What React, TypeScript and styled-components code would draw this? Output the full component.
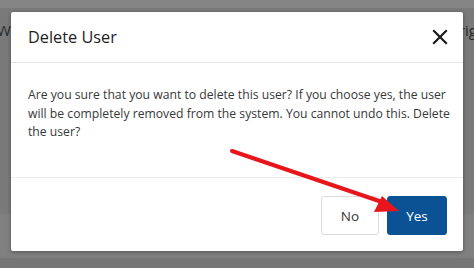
import React from "react";
import styled, { createGlobalStyle } from "styled-components";

const Global = createGlobalStyle`
  html, body { margin: 0; padding: 0; }
  body {
    width: 474px;
    height: 268px;
    overflow: hidden;
    background: #7c7c7c;
    font-family: "Open Sans", "Noto Sans", sans-serif;
  }
`;

const Page = styled.div`
  position: relative;
  width: 474px;
  height: 268px;
  box-sizing: border-box;
  padding: 12px 11px 17px;
  background: linear-gradient(#858585 0, #858585 8px, #7a7a7a 8px, #7a7a7a 214px, #808080 214px, #808080 258px, #767676 258px);
`;

const BackText = styled.span<{ $side: "left" | "right" }>`
  position: absolute;
  top: 20px;
  ${(p) => (p.$side === "left" ? "left: -3px;" : "right: -3px;")}
  font-size: 15px;
  color: #2c2c2c;
`;

const Modal = styled.div`
  position: relative;
  display: flex;
  flex-direction: column;
  height: 239px;
  background: #fff;
  border-radius: 2px;
  box-shadow: 0 1px 4px rgba(0, 0, 0, 0.35);
`;

const Header = styled.div`
  display: flex;
  align-items: center;
  justify-content: space-between;
  height: 50px;
  padding: 0 15px 0 17px;
  border-bottom: 1px solid #e6e6e6;
`;

const Title = styled.h2`
  margin: 0;
  font-size: 16.3px;
  font-weight: 400;
  color: #1e1e1e;
`;

const Close = styled.button`
  display: flex;
  padding: 0;
  border: 0;
  background: none;
  cursor: pointer;
`;

const Body = styled.div`
  flex: 1;
  padding: 23px 10px 0 17px;
  font-size: 12.2px;
  line-height: 18.5px;
  color: #383838;
`;

const Footer = styled.div`
  display: flex;
  justify-content: flex-end;
  gap: 8px;
  height: 74px;
  box-sizing: border-box;
  padding: 18px 16px 0;
  border-top: 1px solid #ececec;
`;

const Button = styled.button<{ $primary?: boolean }>`
  box-sizing: border-box;
  height: 39px;
  width: ${(p) => (p.$primary ? "60px" : "58px")};
  padding: 0;
  border-radius: 3px;
  font-family: "Open Sans", sans-serif;
  font-size: 13.5px;
  border: 1px solid ${(p) => (p.$primary ? "#0b5294" : "#dcdcdc")};
  background: ${(p) => (p.$primary ? "#0b5294" : "#fff")};
  color: ${(p) => (p.$primary ? "#fff" : "#333")};
  cursor: pointer;
`;

const Arrow = styled.svg`
  position: absolute;
  left: 0;
  top: 0;
  pointer-events: none;
`;

export default function App() {
  return (
    <>
      <Global />
      <Page>
        <BackText $side="left">W</BackText>
        <BackText $side="right">rig</BackText>
        <Modal>
          <Header>
            <Title>Delete User</Title>
            <Close aria-label="Close">
              <svg width="16" height="16" viewBox="0 0 16 16">
                <path d="M2 2 L14 14 M14 2 L2 14" stroke="#1a1a1a" strokeWidth="2.2" strokeLinecap="square" />
              </svg>
            </Close>
          </Header>
          <Body>
            Are you sure that you want to delete this user? If you choose yes, the user will be completely removed from the system. You cannot undo this. Delete the user?
          </Body>
          <Footer>
            <Button>No</Button>
            <Button $primary>Yes</Button>
          </Footer>
        </Modal>
        <Arrow width="474" height="268" viewBox="0 0 474 268">
          <path d="M232 151 L382 202" stroke="#e8151b" strokeWidth="4" strokeLinecap="round" />
          <polygon points="399,211 374,212 382,196" fill="#e8151b" />
        </Arrow>
      </Page>
    </>
  );
}
